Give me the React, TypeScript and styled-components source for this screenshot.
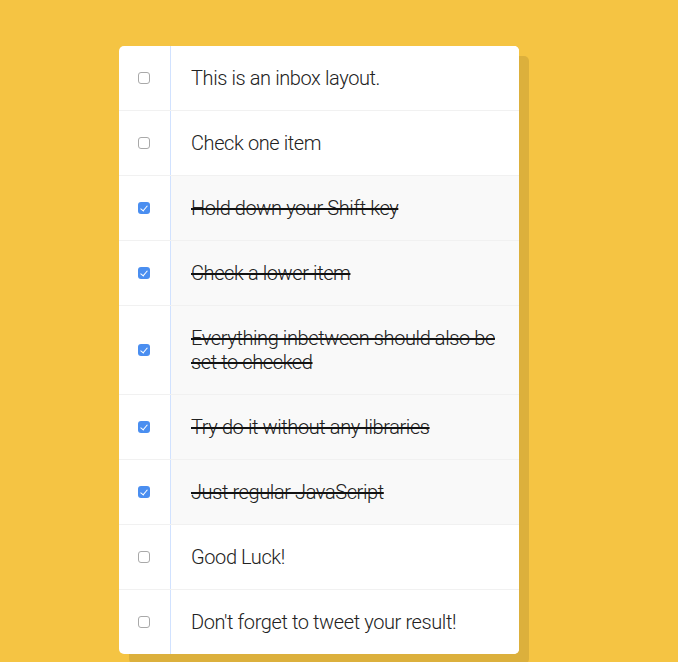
import styled, { createGlobalStyle } from "styled-components";
import { useState } from "react";

const GlobalStyle = createGlobalStyle`
  html, body {
    margin: 0;
    padding: 0;
    background: #f5c443;
    font-family: "Roboto", "Liberation Sans", sans-serif;
  }
`;

const initial = [
  { text: "This is an inbox layout.", done: false },
  { text: "Check one item", done: false },
  { text: "Hold down your Shift key", done: true },
  { text: "Check a lower item", done: true },
  { text: "Everything inbetween should also be set to checked", done: true },
  { text: "Try do it without any libraries", done: true },
  { text: "Just regular JavaScript", done: true },
  { text: "Good Luck!", done: false },
  { text: "Don't forget to tweet your result!", done: false },
];

export default function App() {
  const [items, setItems] = useState(initial);

  const toggle = (i: number) =>
    setItems(items.map((it, j) => (j === i ? { ...it, done: !it.done } : it)));

  return (
    <Page>
      <GlobalStyle />
      <Inbox>
        {items.map((item, i) => (
          <Item key={i}>
            <Check
              type="checkbox"
              checked={item.done}
              onChange={() => toggle(i)}
            />
            <Label $done={item.done}>{item.text}</Label>
          </Item>
        ))}
      </Inbox>
    </Page>
  );
}

const Page = styled.div`
  padding: 46px 0 20px 119px;
`;

const Inbox = styled.div`
  width: 400px;
  background: #fff;
  border-radius: 5px;
  box-shadow: 10px 10px 0 rgba(0, 0, 0, 0.1);
  overflow: hidden;
`;

const Item = styled.div`
  display: flex;
  align-items: center;
  border-bottom: 1px solid #f1f1f1;
  &:last-child {
    border-bottom: 0;
  }
`;

const Check = styled.input`
  appearance: none;
  margin: 0 20px 0 19px;
  width: 12px;
  height: 12px;
  box-sizing: border-box;
  border: 1px solid #a9a9a9;
  border-radius: 3px;
  background: #fff;
  flex: none;
  position: relative;
  &:checked {
    border: 0;
    background: #4a8ef0;
  }
  &:checked::after {
    content: "";
    position: absolute;
    left: 4px;
    top: 1.5px;
    width: 3px;
    height: 6px;
    border: solid #fff;
    border-width: 0 1.6px 1.6px 0;
    transform: rotate(40deg);
  }
`;

const Label = styled.p<{ $done: boolean }>`
  margin: 0;
  padding: 20px;
  flex: 1;
  font-size: 20px;
  line-height: 24px;
  font-weight: 300;
  letter-spacing: -0.4px;
  color: #222;
  border-left: 1px solid #d1e2ff;
  background: ${(p) => (p.$done ? "#f9f9f9" : "#fff")};
  text-decoration: ${(p) => (p.$done ? "line-through" : "none")};
  text-decoration-thickness: 1.5px;
  text-decoration-color: #111;
`;
